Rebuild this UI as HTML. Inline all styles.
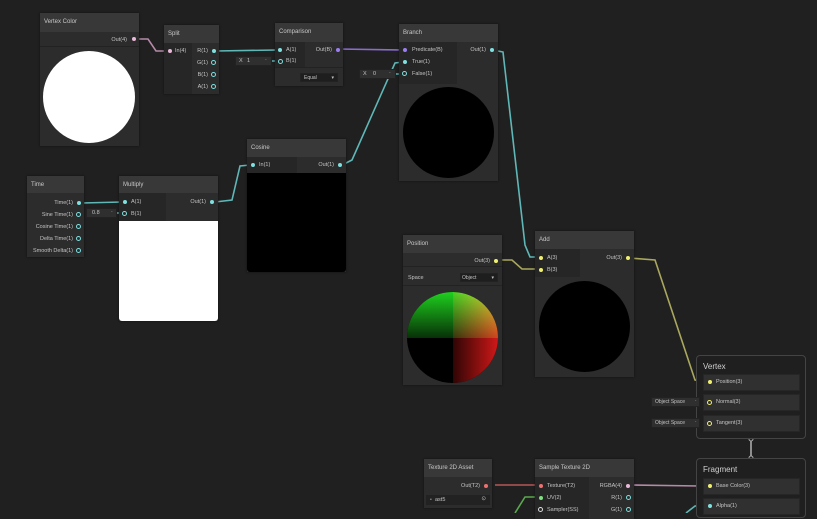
<!DOCTYPE html><html><head><meta charset="utf-8"><style>
*{margin:0;padding:0;box-sizing:border-box}
body{width:817px;height:513px;background:#202020;overflow:hidden;position:relative;font-family:"Liberation Sans",sans-serif;font-size:5.5px;color:#c4c4c4}
.n{position:absolute;background:#2c2c2c;box-shadow:0 0 2px #111}
.h{position:absolute;left:0;right:0;top:0;background:#383838;color:#c8c8c8;font-size:6px;padding:6px 0 0 4px}
.a{position:absolute;background:#262626}
.t{position:absolute;white-space:nowrap}
.r{text-align:right}
.p{position:absolute;width:4px;height:4px;border-radius:50%}
.o{position:absolute;width:5px;height:5px;border-radius:50%;border:1.3px solid}
.f{position:absolute;background:#2f2f2f;border:1px solid #222;color:#c4c4c4}
.m{position:absolute;border:1px solid #444;border-radius:4px;background:#1f1f1f}
.row{position:absolute;background:#303030;border:1px solid #262626}
svg{position:absolute;left:0;top:0}
</style></head><body>
<svg width="817" height="513" style="z-index:0">
<g fill="none" stroke-width="1.6">
<path d="M137 39 L148 39 L156 51 L168 51" stroke="#b58aa8"/>
<path d="M216 51 L277 50" stroke="#5fb7b7"/>
<path d="M338 49 L403 50" stroke="#8a6cd0"/>
<path d="M342 165 L352 160 L395 63 L403 62" stroke="#5fb7b7"/>
<path d="M82 203 L122 202" stroke="#5fb7b7"/>
<path d="M215 202 L232 200 L240 166 L250 165" stroke="#5fb7b7"/>
<path d="M493 50 L503 52 L525 245 L530 257 L538 257" stroke="#5fb7b7"/>
<path d="M497 260 L512 260 L522 269 L538 269" stroke="#a9a85c"/>
<path d="M629 258 L655 260 L695 380 L709 382" stroke="#a9a85c"/>
<path d="M495 485 L538 485" stroke="#b65656"/>
<path d="M515 513 L525 497 L538 497" stroke="#5aa84f"/>
<path d="M632 485 L700 486" stroke="#b58aa8"/>
<path d="M686 513 L695 506 L709 506" stroke="#5fb7b7"/>
<path d="M751 439 L751 458" stroke="#aaa"/>
<path d="M697 403 L709 403 M697 424 L709 424" stroke="#a9a85c"/>
<path d="M270 61 L279 61 M395 74 L404 74 M117 213 L125 213" stroke="#5fb7b7"/>
</g>
<circle cx="751" cy="439" r="2" fill="#202020" stroke="#aaa"/><circle cx="751" cy="458" r="2" fill="#202020" stroke="#aaa"/>
</svg>

<!-- Vertex Color -->
<div class="n" style="left:40px;top:13px;width:99px;height:133px"><div class="h" style="height:19px">Vertex Color</div>
<div class="t r" style="right:12px;top:24px">Out(4)</div><div class="p" style="right:3px;top:24px;background:#e8b8d8"></div>
<div style="position:absolute;left:0;right:0;top:33px;height:1px;background:#222"></div>
<div style="position:absolute;left:3px;top:38px;width:92px;height:92px;border-radius:50%;background:#fff"></div></div>

<!-- Split -->
<div class="n" style="left:164px;top:25px;width:55px;height:69px"><div class="h" style="height:18px">Split</div>
<div class="a" style="left:0;top:18px;width:28px;height:51px"></div>
<div class="p" style="left:4px;top:24px;background:#e8b8d8"></div><div class="t" style="left:11px;top:23px">In(4)</div>
<div class="t r" style="right:11px;top:23px">R(1)</div><div class="p" style="right:3px;top:24px;background:#7fe0e0"></div>
<div class="t r" style="right:11px;top:35px">G(1)</div><div class="o" style="right:3px;top:35px;border-color:#7fe0e0"></div>
<div class="t r" style="right:11px;top:47px">B(1)</div><div class="o" style="right:3px;top:47px;border-color:#7fe0e0"></div>
<div class="t r" style="right:11px;top:59px">A(1)</div><div class="o" style="right:3px;top:59px;border-color:#7fe0e0"></div></div>

<!-- Comparison -->
<div class="f" style="left:235px;top:56px;width:37px;height:10px"><span class="t" style="left:3px;top:1px">X</span><span class="t" style="left:11px;top:1px">1</span><span class="t" style="left:29px;top:0">·</span></div>
<div class="n" style="left:275px;top:23px;width:68px;height:63px"><div class="h" style="height:19px">Comparison</div>
<div class="a" style="left:0;top:19px;width:30px;height:25px"></div>
<div class="p" style="left:3px;top:25px;background:#7fe0e0"></div><div class="t" style="left:11px;top:24px">A(1)</div>
<div class="o" style="left:3px;top:36px;border-color:#7fe0e0"></div><div class="t" style="left:11px;top:35px">B(1)</div>
<div class="t r" style="right:11px;top:24px">Out(B)</div><div class="p" style="right:3px;top:25px;background:#9b7ff0"></div>
<div style="position:absolute;left:0;right:0;top:44px;height:1px;background:#222"></div>
<div class="f" style="left:25px;top:50px;width:38px;height:9px;background:#1e1e1e;font-size:5px"><span class="t" style="left:3px;top:1px">Equal</span><span class="t" style="right:3px;top:1px">▾</span></div></div>

<!-- Branch -->
<div class="f" style="left:359px;top:69px;width:37px;height:10px"><span class="t" style="left:3px;top:1px">X</span><span class="t" style="left:13px;top:1px">0</span><span class="t" style="left:29px;top:0">·</span></div>
<div class="n" style="left:399px;top:24px;width:99px;height:157px"><div class="h" style="height:18px">Branch</div>
<div class="a" style="left:0;top:18px;width:58px;height:42px"></div>
<div class="p" style="left:4px;top:24px;background:#9b7ff0"></div><div class="t" style="left:13px;top:23px">Predicate(B)</div>
<div class="p" style="left:4px;top:36px;background:#7fe0e0"></div><div class="t" style="left:13px;top:35px">True(1)</div>
<div class="o" style="left:3px;top:47px;border-color:#7fe0e0"></div><div class="t" style="left:13px;top:47px">False(1)</div>
<div class="t r" style="right:12px;top:23px">Out(1)</div><div class="p" style="right:4px;top:24px;background:#7fe0e0"></div>
<div style="position:absolute;left:4px;top:63px;width:91px;height:91px;border-radius:50%;background:#000"></div></div>

<!-- Cosine -->
<div class="n" style="left:247px;top:139px;width:99px;height:133px"><div class="h" style="height:18px">Cosine</div>
<div class="a" style="left:0;top:18px;width:50px;height:16px"></div>
<div class="p" style="left:4px;top:24px;background:#7fe0e0"></div><div class="t" style="left:12px;top:23px">In(1)</div>
<div class="t r" style="right:12px;top:23px">Out(1)</div><div class="p" style="right:4px;top:24px;background:#7fe0e0"></div>
<div style="position:absolute;left:0;right:0;top:34px;bottom:0;background:#000;border-radius:0 0 3px 3px"></div></div>

<!-- Time -->
<div class="n" style="left:27px;top:176px;width:57px;height:81px"><div class="h" style="height:17px">Time</div>
<div class="t r" style="right:11px;top:24px">Time(1)</div><div class="p" style="right:3px;top:25px;background:#7fe0e0"></div>
<div class="t r" style="right:11px;top:36px">Sine Time(1)</div><div class="o" style="right:3px;top:36px;border-color:#7fe0e0"></div>
<div class="t r" style="right:11px;top:48px">Cosine Time(1)</div><div class="o" style="right:3px;top:48px;border-color:#7fe0e0"></div>
<div class="t r" style="right:11px;top:60px">Delta Time(1)</div><div class="o" style="right:3px;top:60px;border-color:#7fe0e0"></div>
<div class="t r" style="right:11px;top:72px">Smooth Delta(1)</div><div class="o" style="right:3px;top:72px;border-color:#7fe0e0"></div></div>

<!-- Multiply -->
<div class="f" style="left:86px;top:208px;width:31px;height:10px"><span class="t" style="left:5px;top:1px">0.8</span><span class="t" style="left:24px;top:0">·</span></div>
<div class="n" style="left:119px;top:176px;width:99px;height:145px"><div class="h" style="height:17px">Multiply</div>
<div class="a" style="left:0;top:17px;width:47px;height:28px"></div>
<div class="p" style="left:4px;top:24px;background:#7fe0e0"></div><div class="t" style="left:12px;top:23px">A(1)</div>
<div class="o" style="left:3px;top:35px;border-color:#7fe0e0"></div><div class="t" style="left:12px;top:35px">B(1)</div>
<div class="t r" style="right:12px;top:23px">Out(1)</div><div class="p" style="right:4px;top:24px;background:#7fe0e0"></div>
<div style="position:absolute;left:0;right:0;top:45px;bottom:0;background:#fff;border-radius:0 0 3px 3px"></div></div>

<!-- Position -->
<div class="n" style="left:403px;top:235px;width:99px;height:150px"><div class="h" style="height:18px">Position</div>
<div class="t r" style="right:12px;top:23px">Out(3)</div><div class="p" style="right:4px;top:24px;background:#f0f070"></div>
<div style="position:absolute;left:0;right:0;top:31px;height:1px;background:#222"></div>
<div class="t" style="left:5px;top:40px">Space</div>
<div class="f" style="left:57px;top:38px;width:38px;height:9px;background:#1e1e1e;font-size:5px"><span class="t" style="left:1px;top:1px">Object</span><span class="t" style="right:3px;top:1px">▾</span></div>
<div style="position:absolute;left:0;right:0;top:50px;height:1px;background:#222"></div>
<div style="position:absolute;left:4px;top:57px;width:91px;height:91px;border-radius:50%;overflow:hidden;background:#000;isolation:isolate">
<div style="position:absolute;left:0;top:0;width:100%;height:50%;background:linear-gradient(#1fd01f,#073007)"></div>
<div style="position:absolute;left:50%;top:0;width:50%;height:100%;background:linear-gradient(90deg,#300505,#d01818);mix-blend-mode:screen"></div>
</div></div>

<!-- Add -->
<div class="n" style="left:535px;top:231px;width:99px;height:146px"><div class="h" style="height:18px">Add</div>
<div class="a" style="left:0;top:18px;width:45px;height:28px"></div>
<div class="p" style="left:4px;top:25px;background:#f0f070"></div><div class="t" style="left:12px;top:24px">A(3)</div>
<div class="p" style="left:4px;top:37px;background:#f0f070"></div><div class="t" style="left:12px;top:36px">B(3)</div>
<div class="t r" style="right:12px;top:24px">Out(3)</div><div class="p" style="right:4px;top:25px;background:#f0f070"></div>
<div style="position:absolute;left:4px;top:50px;width:91px;height:91px;border-radius:50%;background:#000"></div></div>

<!-- Vertex master -->
<div class="m" style="left:696px;top:355px;width:110px;height:84px"><div class="t" style="left:6px;top:6px;font-size:8px;color:#d0d0d0">Vertex</div>
<div class="row" style="left:6px;top:18px;width:97px;height:17px"></div><div class="p" style="left:11px;top:24px;background:#f0f070"></div><div class="t" style="left:19px;top:23px">Position(3)</div>
<div class="row" style="left:6px;top:38px;width:97px;height:17px"></div><div class="o" style="left:10px;top:44px;border-color:#f0f070"></div><div class="t" style="left:19px;top:43px">Normal(3)</div>
<div class="row" style="left:6px;top:59px;width:97px;height:17px"></div><div class="o" style="left:10px;top:65px;border-color:#f0f070"></div><div class="t" style="left:19px;top:64px">Tangent(3)</div></div>
<div class="f" style="left:651px;top:397px;width:49px;height:10px;font-size:5px"><span class="t" style="left:3px;top:1px">Object Space</span><span class="t" style="left:43px;top:0">·</span></div>
<div class="f" style="left:651px;top:418px;width:49px;height:10px;font-size:5px"><span class="t" style="left:3px;top:1px">Object Space</span><span class="t" style="left:43px;top:0">·</span></div>

<!-- Fragment -->
<div class="m" style="left:696px;top:458px;width:110px;height:60px"><div class="t" style="left:6px;top:6px;font-size:8px;color:#d0d0d0">Fragment</div>
<div class="row" style="left:6px;top:19px;width:97px;height:17px"></div><div class="p" style="left:11px;top:25px;background:#f0f070"></div><div class="t" style="left:19px;top:24px">Base Color(3)</div>
<div class="row" style="left:6px;top:39px;width:97px;height:17px"></div><div class="p" style="left:11px;top:45px;background:#7fe0e0"></div><div class="t" style="left:19px;top:44px">Alpha(1)</div></div>

<!-- Texture 2D Asset -->
<div class="n" style="left:424px;top:459px;width:68px;height:49px"><div class="h" style="height:18px">Texture 2D Asset</div>
<div class="t r" style="right:12px;top:24px">Out(T2)</div><div class="p" style="right:4px;top:25px;background:#f07070"></div>
<div class="f" style="left:2px;top:36px;width:64px;height:10px;background:#222"><span class="t" style="left:3px;top:1px;color:#888">▪</span><span class="t" style="left:8px;top:1px">ast5</span><span class="t" style="right:3px;top:0">⊙</span></div></div>

<!-- Sample Texture 2D -->
<div class="n" style="left:535px;top:459px;width:99px;height:60px"><div class="h" style="height:18px">Sample Texture 2D</div>
<div class="a" style="left:0;top:18px;width:54px;height:42px"></div>
<div class="p" style="left:4px;top:25px;background:#f07070"></div><div class="t" style="left:12px;top:24px">Texture(T2)</div>
<div class="p" style="left:4px;top:37px;background:#7fe07f"></div><div class="t" style="left:12px;top:36px">UV(2)</div>
<div class="o" style="left:3px;top:48px;border-color:#ddd"></div><div class="t" style="left:12px;top:48px">Sampler(SS)</div>
<div class="t r" style="right:12px;top:24px">RGBA(4)</div><div class="p" style="right:4px;top:25px;background:#e8b8d8"></div>
<div class="t r" style="right:12px;top:36px">R(1)</div><div class="o" style="right:3px;top:36px;border-color:#7fe0e0"></div>
<div class="t r" style="right:12px;top:48px">G(1)</div><div class="o" style="right:3px;top:48px;border-color:#7fe0e0"></div></div>
</body></html>
